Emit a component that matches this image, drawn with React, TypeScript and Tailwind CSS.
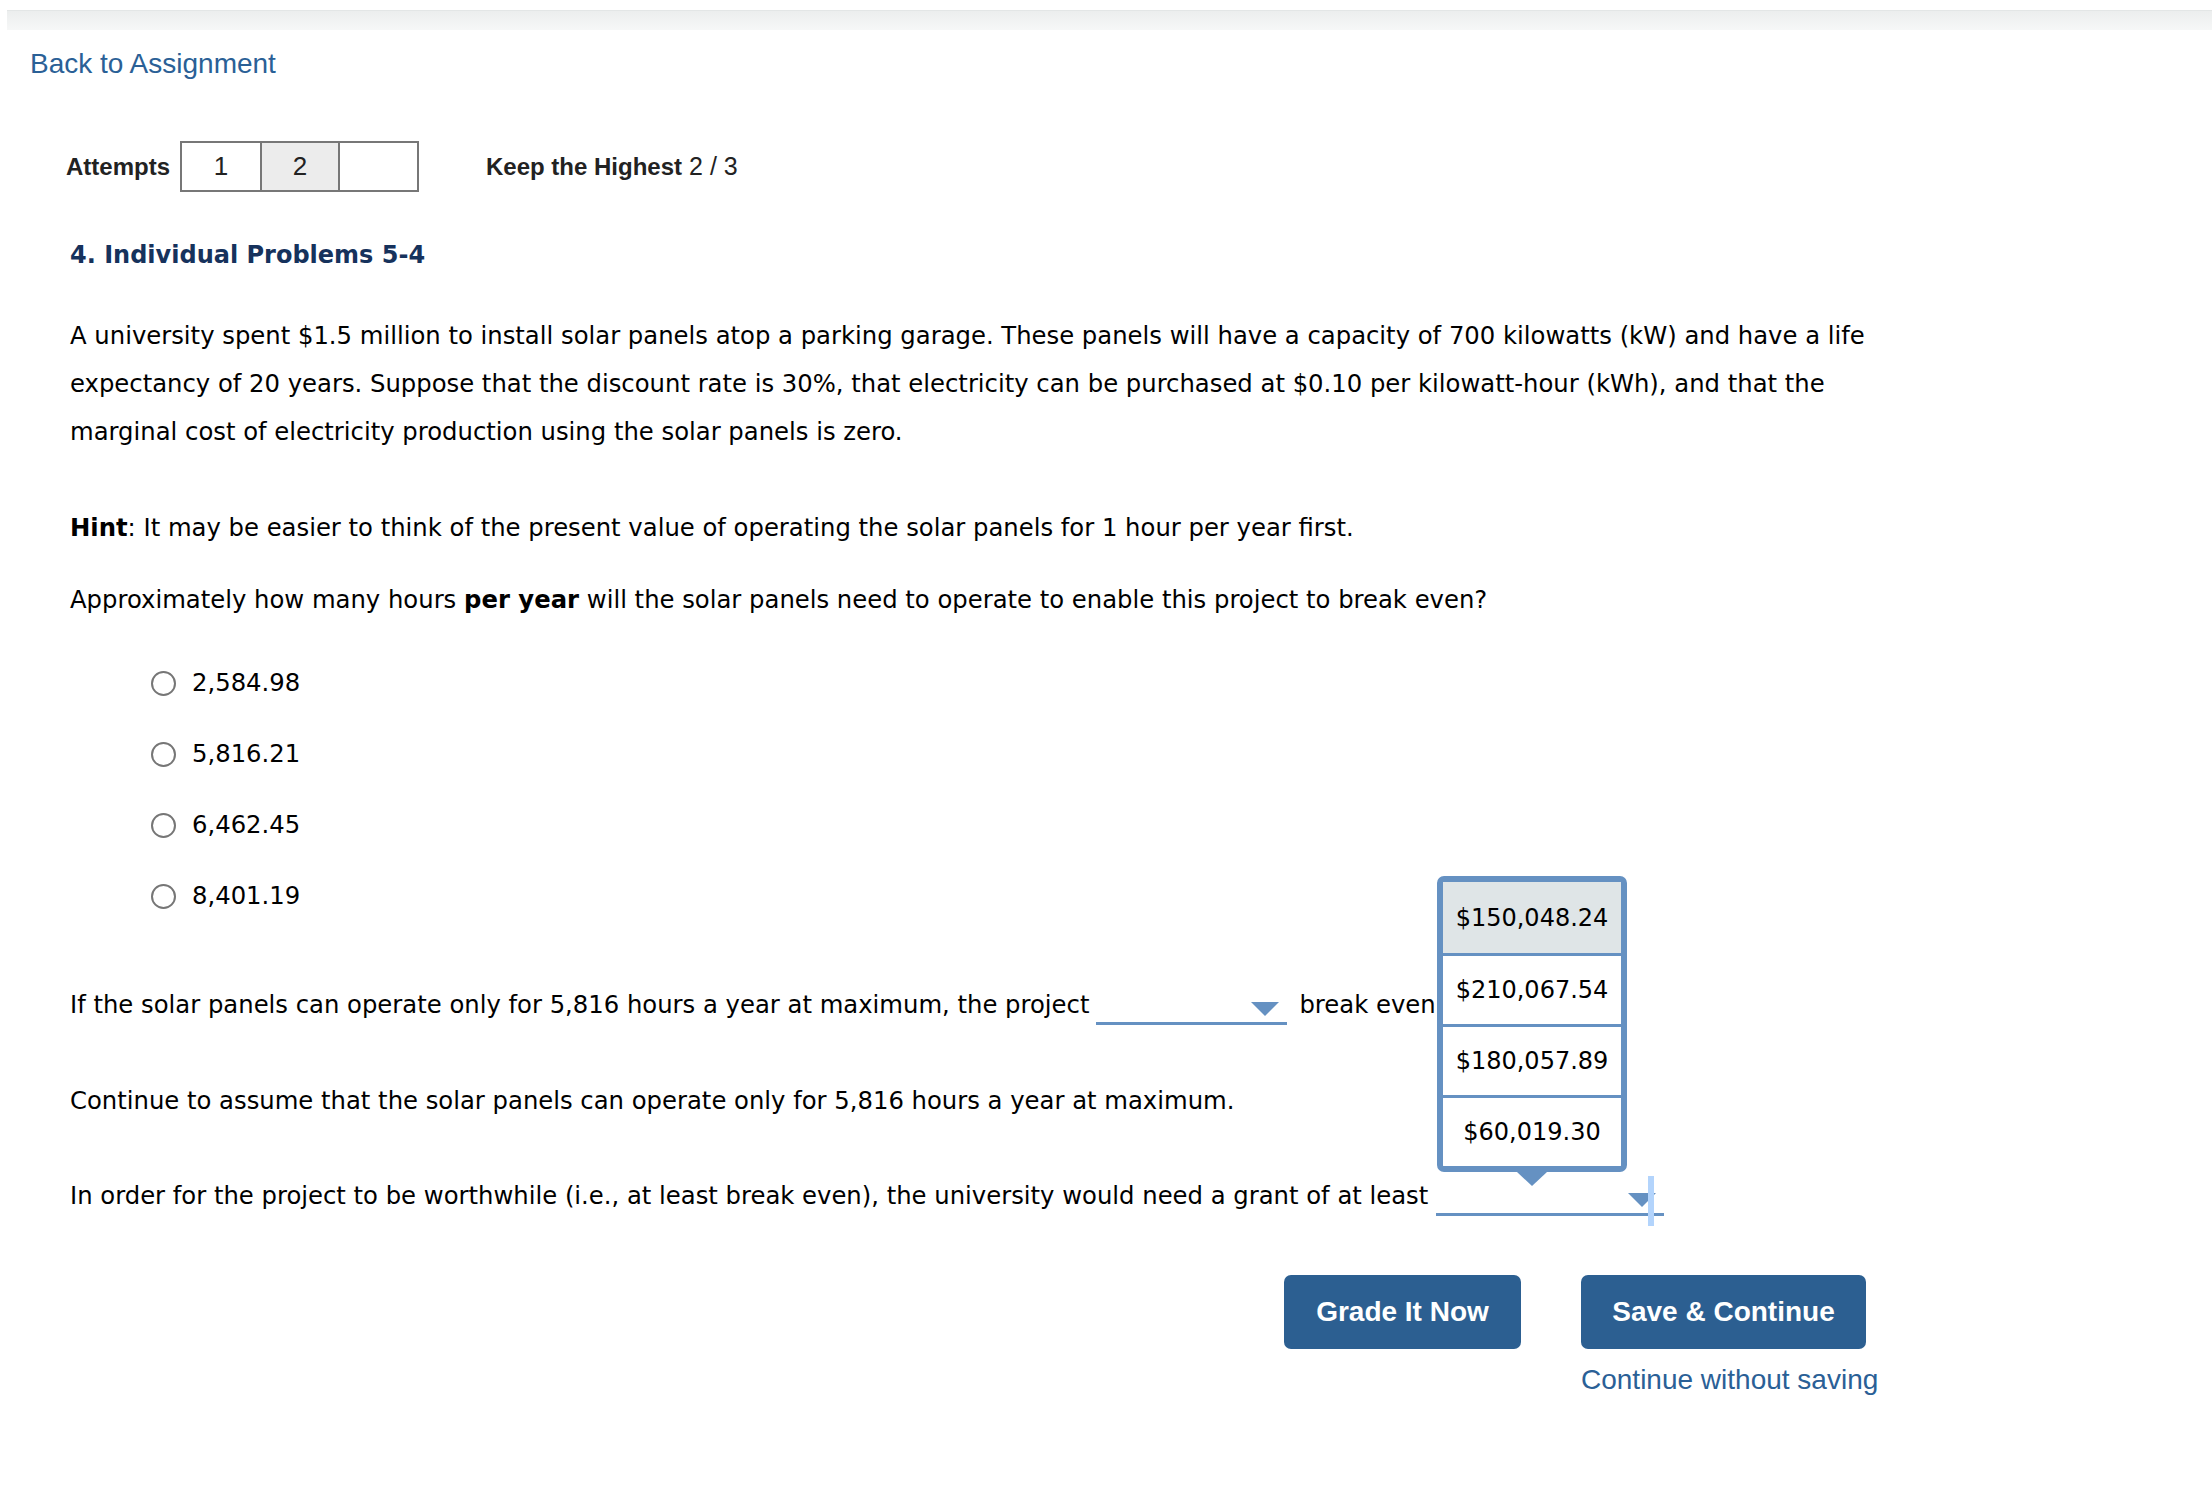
import React from 'react';

const verdana = { fontFamily: '"DejaVu Sans", Verdana, sans-serif' };
const helv = { fontFamily: '"Liberation Sans", Arial, Helvetica, sans-serif' };

const options = ['2,584.98', '5,816.21', '6,462.45', '8,401.19'];
const grants = ['$150,048.24', '$210,067.54', '$180,057.89', '$60,019.30'];

function Caret() {
  return (
    <svg width="28" height="14" viewBox="0 0 28 14" className="shrink-0">
      <path d="M0 0 H28 L14 14 Z" fill="#6591c2" />
    </svg>
  );
}

function Dropdown({ width, focus }: { width: string; focus?: boolean }) {
  return (
    <span className={`relative inline-flex h-[38px] items-end justify-end border-b-[3px] border-[#6591c2] align-bottom ${width}`}>
      <span className="mb-[6px] mr-[8px]">
        <Caret />
      </span>
      {focus && <span className="absolute right-[10px] top-[-2px] h-[50px] w-[6px] bg-[#b3d4fc]" />}
    </span>
  );
}

export default function App() {
  return (
    <div className="relative min-h-[1486px] w-full bg-white text-black">
      {/* top band */}
      <div className="ml-[7px] mt-[10px] h-[20px] border-t border-[#e3e6e6] bg-gradient-to-b from-[#eceeee] to-[#f6f7f7]" />

      <div className="pl-[30px] pt-[18px]">
        <a className="text-[28px] leading-[32px] text-[#2a6096]" style={helv}>
          Back to Assignment
        </a>
      </div>

      {/* attempts row */}
      <div className="mt-[61px] flex items-center pl-[66px]" style={helv}>
        <span className="mr-[10px] text-[24px] font-bold text-[#222]">Attempts</span>
        <div className="flex h-[51px] border-2 border-[#777]">
          <div className="flex w-[78px] items-center justify-center text-[26px] text-[#222]">1</div>
          <div className="flex w-[80px] items-center justify-center border-x-2 border-[#777] bg-[#ececec] text-[26px] text-[#222]">
            2
          </div>
          <div className="w-[77px]" />
        </div>
        <span className="ml-[67px] text-[24px] font-bold text-[#222]">Keep the Highest</span>
        <span className="ml-[7px] text-[25px] text-[#222]">2 / 3</span>
      </div>

      <div className="pl-[70px]" style={verdana}>
        <h2 className="mt-[48px] text-[24px] font-bold leading-[30px] text-[#16325c]">4. Individual Problems 5-4</h2>

        <p className="mt-[42px] max-w-[1800px] text-[24.3px] leading-[48px]">
          A university spent $1.5 million to install solar panels atop a parking garage. These panels will have a
          capacity of 700 kilowatts (kW) and have a life expectancy of 20 years. Suppose that the discount rate is
          30%, that electricity can be purchased at $0.10 per kilowatt-hour (kWh), and that the marginal cost of
          electricity production using the solar panels is zero.
        </p>

        <p className="mt-[48px] text-[24.3px] leading-[48px]">
          <b>Hint</b>: It may be easier to think of the present value of operating the solar panels for 1 hour per year
          first.
        </p>

        <p className="mt-[24px] text-[24.3px] leading-[48px]">
          Approximately how many hours <b>per year</b> will the solar panels need to operate to enable this project to
          break even?
        </p>

        <div className="mt-[24px] flex flex-col">
          {options.map((o) => (
            <label key={o} className="flex h-[71px] items-center pl-[81px] text-[24.3px]">
              <span className="h-[25px] w-[25px] rounded-full border-2 border-[#767676]" />
              <span className="ml-[16px]">{o}</span>
            </label>
          ))}
        </div>

        <div className="mt-[53px] flex items-end text-[24.3px] leading-[40px]">
          <span>If the solar panels can operate only for 5,816 hours a year at maximum, the project</span>
          <span className="ml-[7px]">
            <Dropdown width="w-[191px]" />
          </span>
          <span className="ml-[12px]">break even.</span>
        </div>

        <p className="mt-[52px] text-[24.3px] leading-[48px]">
          Continue to assume that the solar panels can operate only for 5,816 hours a year at maximum.
        </p>

        <div className="mt-[51px] flex items-end text-[24.3px] leading-[40px]">
          <span>
            In order for the project to be worthwhile (i.e., at least break even), the university would need a grant of
            at least
          </span>
          <span className="ml-[8px]">
            <Dropdown width="w-[228px]" focus />
          </span>
        </div>

        {/* buttons */}
        <div className="mt-[59px] flex pl-[1214px]" style={helv}>
          <button className="h-[74px] w-[237px] rounded-[7px] bg-[#2c5f91] text-[28px] font-bold text-white">
            Grade It Now
          </button>
          <div className="ml-[60px] flex flex-col">
            <button className="h-[74px] w-[285px] rounded-[7px] bg-[#2c5f91] text-[28px] font-bold text-white">
              Save &amp; Continue
            </button>
            <a className="mt-[14px] text-[28px] leading-[34px] text-[#2a6096]">Continue without saving</a>
          </div>
        </div>
      </div>

      {/* open dropdown list */}
      <div className="absolute left-[1437px] top-[866px] w-[190px]" style={verdana}>
        <div className="overflow-hidden rounded-[7px] border-[6px] border-[#6591c2] bg-white">
          {grants.map((g, i) => (
            <div
              key={g}
              className={`flex h-[71px] items-center justify-center text-[24px] ${
                i > 0 ? 'border-t-[3px] border-[#6591c2]' : ''
              } ${i === 0 ? 'bg-[#dfe5e7]' : 'bg-white'}`}
            >
              {g}
            </div>
          ))}
        </div>
        <div className="mx-auto h-0 w-0 border-x-[15px] border-t-[14px] border-x-transparent border-t-[#6591c2]" />
      </div>
    </div>
  );
}
